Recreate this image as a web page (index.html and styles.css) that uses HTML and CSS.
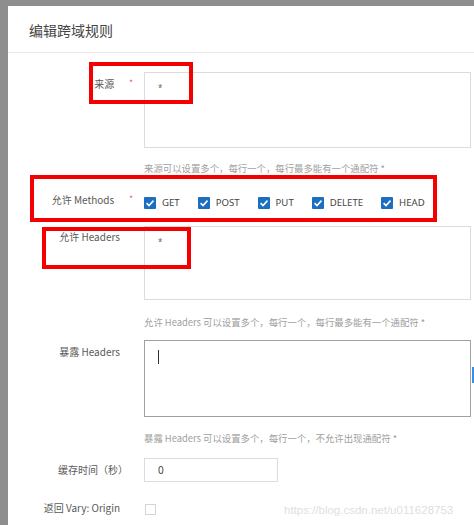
FILE: index.html
```html
<!DOCTYPE html>
<html lang="zh-CN">
<head>
<meta charset="utf-8">
<title>编辑跨域规则</title>
<link rel="stylesheet" href="styles.css">
</head>
<body>
<div class="page">
  <div class="dialog">
    <div class="dlg-head"><h2 class="dlg-title">编辑跨域规则</h2></div>
    <div class="dlg-body">
      <div class="row">
        <div class="lbl req">来源<span class="star">*</span></div>
        <div class="ctl">
          <div class="ta ta-src">*</div>
          <p class="hint">来源可以设置多个，每行一个，每行最多能有一个通配符 *</p>
        </div>
      </div>
      <div class="row row-methods">
        <div class="lbl req">允许 Methods<span class="star">*</span></div>
        <div class="ctl checks">
          <span class="chk"><svg class="box" viewBox="0 0 12 12"><rect width="12" height="12" rx="1" fill="#1b6ec2"/><path d="M2.6 6.1 L5 8.5 L9.5 3.6" fill="none" stroke="#fff" stroke-width="1.6"/></svg>GET</span>
          <span class="chk"><svg class="box" viewBox="0 0 12 12"><rect width="12" height="12" rx="1" fill="#1b6ec2"/><path d="M2.6 6.1 L5 8.5 L9.5 3.6" fill="none" stroke="#fff" stroke-width="1.6"/></svg>POST</span>
          <span class="chk"><svg class="box" viewBox="0 0 12 12"><rect width="12" height="12" rx="1" fill="#1b6ec2"/><path d="M2.6 6.1 L5 8.5 L9.5 3.6" fill="none" stroke="#fff" stroke-width="1.6"/></svg>PUT</span>
          <span class="chk"><svg class="box" viewBox="0 0 12 12"><rect width="12" height="12" rx="1" fill="#1b6ec2"/><path d="M2.6 6.1 L5 8.5 L9.5 3.6" fill="none" stroke="#fff" stroke-width="1.6"/></svg>DELETE</span>
          <span class="chk"><svg class="box" viewBox="0 0 12 12"><rect width="12" height="12" rx="1" fill="#1b6ec2"/><path d="M2.6 6.1 L5 8.5 L9.5 3.6" fill="none" stroke="#fff" stroke-width="1.6"/></svg>HEAD</span>
        </div>
      </div>
      <div class="row row-allow">
        <div class="lbl">允许 Headers</div>
        <div class="ctl">
          <div class="ta ta-allow">*</div>
          <p class="hint hint-allow">允许 Headers 可以设置多个，每行一个，每行最多能有一个通配符 *</p>
        </div>
      </div>
      <div class="row row-expose">
        <div class="lbl">暴露 Headers</div>
        <div class="ctl">
          <div class="ta ta-expose"><span class="caret"></span></div>
          <p class="hint hint-expose">暴露 Headers 可以设置多个，每行一个，不允许出现通配符 *</p>
        </div>
      </div>
      <div class="row row-cache">
        <div class="lbl lbl-input">缓存时间（秒）</div>
        <div class="ctl">
          <div class="inp">0</div>
        </div>
      </div>
      <div class="row row-vary">
        <div class="lbl lbl-vary">返回 Vary: Origin</div>
        <div class="ctl">
          <span class="box-empty"></span>
        </div>
      </div>
    </div>
  </div>
  <div class="mark mark-src"></div>
  <div class="mark mark-methods"></div>
  <div class="mark mark-headers"></div>
  <div class="edge-handle"></div>
  <div class="watermark">https://blog.csdn.net/u011628753</div>
</div>
</body>
</html>
```

FILE: styles.css
```css
* { box-sizing: border-box; }
html, body { margin: 0; padding: 0; }
body {
  width: 474px;
  height: 525px;
  overflow: hidden;
  background: #8e8e8e;
  font-family: "Noto Sans CJK SC", "Noto Sans", sans-serif;
  color: #555;
}
.page {
  position: relative;
  width: 474px;
  height: 525px;
  padding: 6px 0 0 8px;
}
.dialog {
  background: #fff;
  width: 466px;
  height: 519px;
}
.dlg-head {
  height: 47px;
  border-bottom: 1px solid #e8e8e8;
  padding: 13px 0 0 21px;
}
.dlg-title {
  margin: 0;
  font-size: 14px;
  line-height: 22px;
  font-weight: normal;
  color: #444;
}
.dlg-body {
  padding-top: 19px;
}
.row {
  display: grid;
  grid-template-columns: 125px 327px;
  column-gap: 11px;
}
.lbl {
  font-size: 10px;
  line-height: 16px;
  text-align: right;
  padding-top: 4px;
  padding-right: 13px;
  color: #595959;
  white-space: nowrap;
}
.lbl.req { padding-right: 0; }
.star {
  color: #e8453c;
  margin-left: 15px;
  font-size: 8px;
  position: relative;
  top: -2px;
}
.ta {
  border: 1px solid #dcdcdc;
  padding: 7px 13px;
  font-size: 8px;
  line-height: 16px;
  color: #666;
  font-family: "Noto Sans", sans-serif;
}
.ta-src { height: 76px; }
.ta-allow { height: 74px; }
.ta-expose { height: 77px; border-color: #a0a0a0; padding-top: 9px; }
.caret {
  display: inline-block;
  width: 1px;
  height: 14px;
  background: #333;
  vertical-align: top;
}
.hint {
  margin: 12px 0 0;
  font-size: 9.4px;
  line-height: 16px;
  color: #a0a0a0;
  white-space: nowrap;
}
.hint-allow { margin-top: 14px; }
.hint-expose { margin-top: 13px; }
.row-methods { margin-top: 14px; }
.row-methods .lbl { padding-top: 2px; }
.checks {
  display: flex;
  align-items: center;
  height: 24px;
  column-gap: 18px;
}
.chk {
  display: flex;
  align-items: center;
  font-family: "Noto Sans", sans-serif;
  font-size: 9.6px;
  color: #444;
  padding-top: 1px;
}
.box {
  width: 12px;
  height: 12px;
  margin-right: 6px;
  flex: none;
}
.row-allow { margin-top: 12px; }
.row-allow .lbl { padding-top: 3px; }
.row-expose { margin-top: 10px; }
.row-expose .lbl { padding-top: 4px; }
.row-cache { margin-top: 12px; }
.lbl-input { padding-top: 4px; padding-right: 5px; }
.inp {
  width: 134px;
  height: 24px;
  border: 1px solid #dcdcdc;
  padding: 0 13px;
  font-family: "Noto Sans", sans-serif;
  font-size: 10px;
  line-height: 22px;
  color: #444;
}
.row-vary { margin-top: 15px; }
.lbl-vary { padding-top: 3px; }
.row-vary .ctl {
  display: flex;
  align-items: center;
  height: 24px;
}
.box-empty {
  display: block;
  width: 11px;
  height: 11px;
  margin-left: 1px;
  border: 1px solid #d4d4d4;
  background: #fff;
}
.mark {
  position: absolute;
  border: 4px solid #f40000;
}
.mark-src { left: 89px; top: 62px; width: 104px; height: 42px; }
.mark-methods { left: 30px; top: 175px; width: 407px; height: 47px; }
.mark-headers { left: 42px; top: 227px; width: 149px; height: 42px; }
.edge-handle {
  position: absolute;
  left: 472px;
  top: 367px;
  width: 2px;
  height: 16px;
  background: #3a8ee6;
}
.watermark {
  position: absolute;
  left: 284px;
  top: 502px;
  font-family: "Liberation Sans", sans-serif;
  font-size: 11.5px;
  line-height: 16px;
  color: #e0e0e0;
  white-space: nowrap;
}
```
